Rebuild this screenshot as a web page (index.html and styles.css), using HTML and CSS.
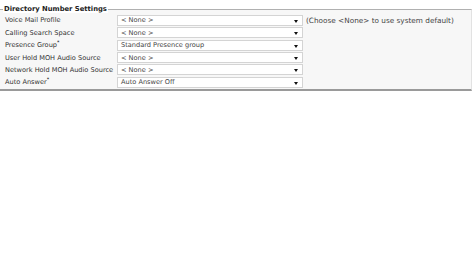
FILE: index.html
```html
<!DOCTYPE html>
<html>
<head>
<meta charset="utf-8">
<link rel="stylesheet" href="styles.css">
</head>
<body>
<fieldset class="settings">
  <legend class="title">Directory Number Settings</legend>
  <div class="grid">
    <div class="label">Voice Mail Profile</div>
    <div class="field"><div class="select"><span>&lt; None &gt;</span><i class="arrow"></i></div><span class="hint">(Choose &lt;None&gt; to use system default)</span></div>
    <div class="label">Calling Search Space</div>
    <div class="field"><div class="select"><span>&lt; None &gt;</span><i class="arrow"></i></div></div>
    <div class="label">Presence Group<sup>*</sup></div>
    <div class="field"><div class="select"><span>Standard Presence group</span><i class="arrow"></i></div></div>
    <div class="label">User Hold MOH Audio Source</div>
    <div class="field"><div class="select"><span>&lt; None &gt;</span><i class="arrow"></i></div></div>
    <div class="label">Network Hold MOH Audio Source</div>
    <div class="field"><div class="select"><span>&lt; None &gt;</span><i class="arrow"></i></div></div>
    <div class="label">Auto Answer<sup>*</sup></div>
    <div class="field"><div class="select"><span>Auto Answer Off</span><i class="arrow"></i></div></div>
  </div>
</fieldset>
</body>
</html>
```
FILE: styles.css
```css
html, body { margin: 0; padding: 0; background: #ffffff; }
body { font-family: "DejaVu Sans", Verdana, sans-serif; font-size: 6.6px; color: #333333; }
.settings {
  margin: 5px 2px 0 0;
  padding: 5px 0 0 5px;
  border: 0;
  border-top: 1px solid #b0b0b0;
  border-right: 1px solid #e2e2e2;
  border-bottom: 2px solid #9a9a9a;
  background: #f7f7f7;
}
.title {
  font-weight: bold;
  color: #222;
  padding: 0 1px;
  margin-left: -2px;
  font-size: 6.8px;
  background: #ffffff;
  line-height: 8px;
}
.grid {
  display: grid;
  grid-template-columns: 112px 1fr;
  grid-auto-rows: 12.45px;
  align-items: center;
  margin-top: -4px;
}
.label { white-space: nowrap; line-height: 10px; }
.label sup { font-size: 5px; line-height: 0; vertical-align: 3px; color: #000; }
.field { display: flex; align-items: center; gap: 3px; }
.select {
  position: relative;
  width: 186px;
  height: 11px;
  box-sizing: border-box;
  border: 1px solid #d4d4d4;
  background: #ffffff;
  display: flex;
  align-items: center;
  padding-left: 3px;
  color: #444;
}
.arrow {
  position: absolute;
  right: 4px;
  top: 4px;
  width: 0; height: 0;
  border-left: 2.5px solid transparent;
  border-right: 2.5px solid transparent;
  border-top: 3px solid #111;
}
.hint { white-space: nowrap; color: #444; font-size: 7.3px; }
```
